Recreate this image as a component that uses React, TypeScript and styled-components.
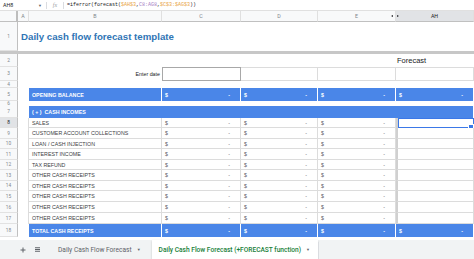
import React from "react";
import styled, { createGlobalStyle } from "styled-components";

const Global = createGlobalStyle`
  html, body { margin: 0; padding: 0; background: #fff; }
  body { overflow: hidden; }
  * { box-sizing: border-box; }
`;

const COLS = "18px 11px 133px 79px 77px 78px 78px";
const BLUE = "#4a86e8";

const Page = styled.div`
  width: 474px;
  height: 259px;
  overflow: hidden;
  display: flex;
  flex-direction: column;
  font-family: "Liberation Sans", Arial, sans-serif;
`;

const FormulaBar = styled.div`
  height: 11px;
  display: flex;
  align-items: center;
  border-bottom: 1px solid #e0e0e0;
  color: #202124;
`;

const NameBox = styled.div`
  width: 38px;
  padding-left: 3px;
  font: 5.3px Roboto, Arial, sans-serif;
`;

const Caret = styled.span`
  width: 8px;
  font-size: 4px;
  color: #5f6368;
`;

const Divider = styled.span`
  width: 1px;
  height: 7px;
  background: #dadce0;
`;

const Fx = styled.span`
  width: 16px;
  text-align: center;
  font: italic 6px "Liberation Serif", serif;
  color: #9aa0a6;
`;

const Formula = styled.div`
  padding-left: 3px;
  font: 5px "Liberation Mono", monospace;
  white-space: pre;
`;

const Ref = styled.span<{ $c: string }>`
  color: ${(p) => p.$c};
`;

const Row = styled.div<{ $h: number }>`
  display: grid;
  grid-template-columns: ${COLS};
  height: ${(p) => p.$h}px;
  flex: none;
`;

const FreezeBar = styled.div`
  height: 3px;
  background: #c7c7c7;
  flex: none;
`;

const Corner = styled.div`
  background: #f8f9fa;
  border-right: 2px solid #bdbdbd;
  border-bottom: 1px solid #c0c0c0;
`;

const ColHead = styled.div<{ $active?: boolean }>`
  position: relative;
  display: flex;
  align-items: center;
  justify-content: center;
  background: ${(p) => (p.$active ? "#e1e3e6" : "#f8f9fa")};
  color: ${(p) => (p.$active ? "#202124" : "#80868b")};
  border-right: 1px solid #e0e0e0;
  border-bottom: 1px solid #c0c0c0;
  font: 5.3px Roboto, Arial, sans-serif;
`;

const HiddenMark = styled.span<{ $side: "left" | "right" }>`
  position: absolute;
  top: 4px;
  ${(p) => (p.$side === "left" ? "right: 2px;" : "left: 1px;")}
  width: 0;
  height: 0;
  border-top: 1.5px solid transparent;
  border-bottom: 1.5px solid transparent;
  ${(p) =>
    p.$side === "left"
      ? "border-right: 2px solid #202124;"
      : "border-left: 2px solid #202124;"}
`;

const RowNum = styled.div<{ $active?: boolean }>`
  display: flex;
  align-items: center;
  justify-content: center;
  background: ${(p) => (p.$active ? "#e1e3e6" : "#f8f9fa")};
  color: ${(p) => (p.$active ? "#202124" : "#80868b")};
  border-right: 1px solid #c0c0c0;
  border-bottom: 1px solid #e2e2e2;
  font: 4.8px Roboto, Arial, sans-serif;
`;

const Cell = styled.div<{ $lined?: boolean; $span?: boolean }>`
  display: flex;
  align-items: center;
  min-width: 0;
  overflow: hidden;
  white-space: nowrap;
  padding: 0 3px;
  font-size: 5.3px;
  color: #3c4043;
  ${(p) => p.$span && "grid-column: 3 / -1;"}
  ${(p) =>
    p.$lined &&
    "border-right: 1px solid #dcdcdc; border-bottom: 1px solid #dcdcdc;"}
`;

const LeadCell = styled(Cell)`
  border-right: 1px solid #dcdcdc;
`;

const GapCell = styled(Cell)<{ $hidden?: boolean }>`
  ${(p) => p.$hidden && "border-left: 2px solid #d0d0d0;"}
`;

const TitleCell = styled(Cell)`
  grid-column: 2 / -1;
  font-size: 9.7px;
  font-weight: bold;
  color: #2f75b5;
`;

const DateLabel = styled(Cell)`
  justify-content: flex-end;
  padding-right: 2px;
  color: #202124;
`;

const InputCell = styled(Cell)<{ $strong?: boolean }>`
  border-top: 1px solid ${(p) => (p.$strong ? "#a8a8a8" : "#dcdcdc")};
  border-bottom: 1px solid ${(p) => (p.$strong ? "#a8a8a8" : "#dcdcdc")};
  border-right: 1px solid ${(p) => (p.$strong ? "#a8a8a8" : "#dcdcdc")};
  ${(p) => p.$strong && "border-left: 1px solid #a8a8a8;"}
`;

const ForecastCell = styled(Cell)`
  align-items: flex-end;
  padding: 0 0 2px 1px;
  font-size: 7.5px;
  color: #202124;
`;

const BlueCell = styled(Cell)<{ $shade?: string }>`
  background: ${(p) => p.$shade || BLUE};
  color: #fff;
  font-weight: bold;
  border-right: 1px solid #fff;
`;

const MoneyCell = styled(Cell)`
  justify-content: space-between;
  padding: 0 10px 0 3px;
  color: #5f6368;
`;

const BlueMoney = styled(BlueCell)`
  justify-content: space-between;
  padding: 0 10px 0 3px;
`;

const SelectedCell = styled(Cell)`
  position: relative;
  box-shadow: inset 0 0 0 1px #3b78e7;
  border-left: 2px solid #d0d0d0;

  &::after {
    content: "";
    position: absolute;
    right: 0;
    bottom: -2px;
    width: 4px;
    height: 4px;
    background: #3b78e7;
    border: 1px solid #fff;
  }
`;

const Gap = styled.div<{ $h: number }>`
  height: ${(p) => p.$h}px;
  flex: none;
`;

const TabBar = styled.div`
  flex: 1;
  display: flex;
  align-items: stretch;
  padding-left: 16px;
  background: #f1f3f4;
  font: 6.6px Roboto, Arial, sans-serif;
`;

const TabTool = styled.div`
  width: 14px;
  display: flex;
  align-items: center;
  justify-content: center;
  color: #5f6368;
`;

const Tab = styled.div<{ $active?: boolean }>`
  display: flex;
  align-items: center;
  gap: 5px;
  padding: 0 8px 0 7px;
  color: ${(p) => (p.$active ? "#188038" : "#5f6368")};
  background: ${(p) => (p.$active ? "#fff" : "transparent")};
  font-weight: ${(p) => (p.$active ? 500 : 400)};
  white-space: nowrap;
  ${(p) => p.$active && "box-shadow: 0 1px 2px rgba(60,64,67,0.25);"}
`;

const FirstTab = styled(Tab)`
  margin-left: 7px;
  padding-right: 11px;
`;

const TabCaret = styled.span`
  font-size: 4px;
  color: #5f6368;
`;

const TabRest = styled.div`
  flex: 1;
  margin-top: 2px;
  border-left: 1px solid #dadce0;
  background: #f1f3f4;
`;

const receipts = [
  "SALES",
  "CUSTOMER ACCOUNT COLLECTIONS",
  "LOAN / CASH INJECTION",
  "INTEREST INCOME",
  "TAX REFUND",
  "OTHER CASH RECEIPTS",
  "OTHER CASH RECEIPTS",
  "OTHER CASH RECEIPTS",
  "OTHER CASH RECEIPTS",
  "OTHER CASH RECEIPTS",
];
const receiptHeights = [10, 11, 10, 11, 10, 11, 10, 11, 11, 11];

const Money = ({ blue }: { blue?: boolean }) => {
  const C = blue ? BlueMoney : MoneyCell;
  return (
    <C $lined={!blue}>
      <span>$</span>
      <span>-</span>
    </C>
  );
};

export default function App() {
  return (
    <Page>
      <Global />
      <FormulaBar>
        <NameBox>AH8</NameBox>
        <Caret>▼</Caret>
        <Divider />
        <Fx>fx</Fx>
        <Divider />
        <Formula>
          =iferror(forecast(<Ref $c="#e8a33d">$AH$3</Ref>,
          <Ref $c="#a57ec4">C8:AG8</Ref>,<Ref $c="#e8a33d">$C$3:$AG$3</Ref>))
        </Formula>
      </FormulaBar>

      <Row $h={11}>
        <Corner />
        <ColHead>A</ColHead>
        <ColHead>B</ColHead>
        <ColHead>C</ColHead>
        <ColHead>D</ColHead>
        <ColHead>
          E<HiddenMark $side="left" />
        </ColHead>
        <ColHead $active>
          AH<HiddenMark $side="right" />
        </ColHead>
      </Row>

      <Row $h={29}>
        <RowNum>1</RowNum>
        <TitleCell>Daily cash flow forecast template</TitleCell>
      </Row>
      <FreezeBar />

      <Row $h={13}>
        <RowNum>2</RowNum>
        <Cell />
        <Cell />
        <Cell />
        <Cell />
        <Cell />
        <ForecastCell>Forecast</ForecastCell>
      </Row>

      <Row $h={14}>
        <RowNum>3</RowNum>
        <Cell />
        <DateLabel>Enter date</DateLabel>
        <InputCell $strong />
        <InputCell />
        <InputCell />
        <InputCell />
      </Row>

      <Row $h={7}>
        <RowNum>4</RowNum>
      </Row>

      <Row $h={13}>
        <RowNum>5</RowNum>
        <Cell />
        <BlueCell>OPENING BALANCE</BlueCell>
        <Money blue />
        <Money blue />
        <Money blue />
        <Money blue />
      </Row>

      <Row $h={5}>
        <RowNum>6</RowNum>
      </Row>

      <Row $h={12}>
        <RowNum>7</RowNum>
        <Cell />
        <BlueCell $span>( + )&nbsp; CASH INCOMES</BlueCell>
      </Row>

      {receipts.map((label, i) => (
        <Row $h={receiptHeights[i]} key={i}>
          <RowNum $active={i === 0}>{8 + i}</RowNum>
          <LeadCell />
          <Cell $lined>{label}</Cell>
          <Money />
          <Money />
          <Money />
          {i === 0 ? <SelectedCell /> : <GapCell $lined $hidden />}
        </Row>
      ))}

      <Row $h={13}>
        <RowNum>18</RowNum>
        <Cell />
        <BlueCell>TOTAL CASH RECEIPTS</BlueCell>
        <Money blue />
        <Money blue />
        <Money blue />
        <Money blue />
      </Row>

      <Gap $h={3} />

      <TabBar>
        <TabTool>
          <svg width="6" height="6" viewBox="0 0 6 6">
            <path d="M3 0.5v5M0.5 3h5" stroke="#5f6368" strokeWidth="1" />
          </svg>
        </TabTool>
        <TabTool>
          <svg width="5" height="5" viewBox="0 0 5 5">
            <path d="M0 0.75h5M0 2.5h5M0 4.25h5" stroke="#5f6368" strokeWidth="1" />
          </svg>
        </TabTool>
        <FirstTab>
          Daily Cash Flow Forecast <TabCaret>▼</TabCaret>
        </FirstTab>
        <Tab $active>
          Daily Cash Flow Forecast (+FORECAST function) <TabCaret>▼</TabCaret>
        </Tab>
        <TabRest />
      </TabBar>
    </Page>
  );
}
